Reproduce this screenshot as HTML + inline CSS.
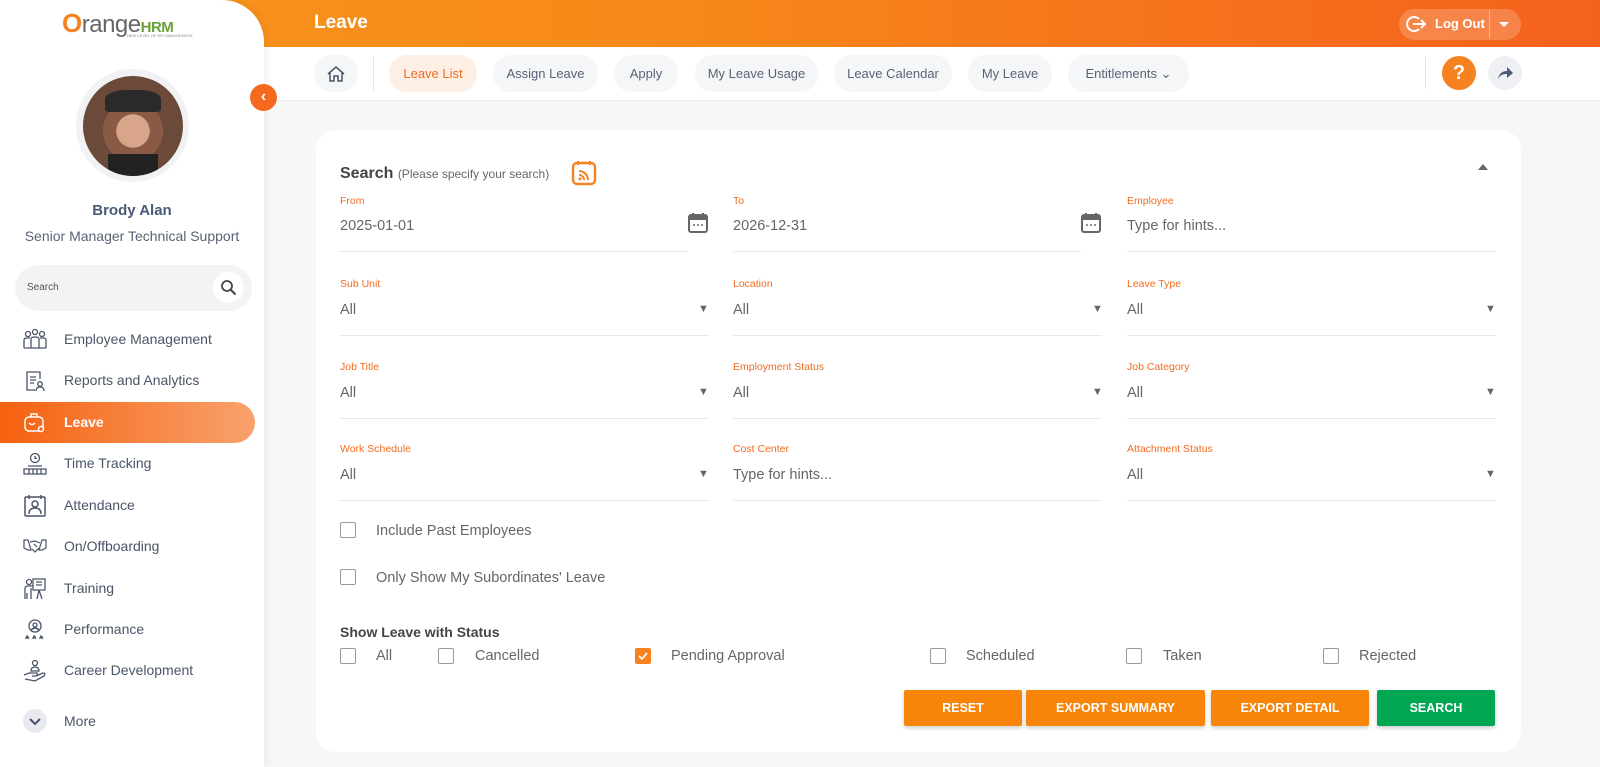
<!DOCTYPE html>
<html><head><meta charset="utf-8"><style>
*{box-sizing:border-box;margin:0;padding:0}
body{width:1600px;height:767px;overflow:hidden;background:#f7f7f7;font-family:"Liberation Sans",sans-serif;position:relative;color:#555}
.abs{position:absolute}
#hdr{left:0;top:0;width:1600px;height:47px;background:linear-gradient(90deg,#f7941d 0%,#f78a1a 40%,#f4611c 100%)}
#nav{left:264px;top:47px;width:1336px;height:54px;background:#fff;border-bottom:1px solid #eee}
#side{left:0;top:0;width:264px;height:767px;background:#fff;border-top-right-radius:42px;box-shadow:3px 0 8px rgba(0,0,0,.05)}
.pill{position:absolute;top:8px;height:37px;border-radius:18px;background:#f5f6f8;font-size:13px;color:#5a6275;line-height:37px;text-align:center}
.menu{position:absolute;left:0;width:255px;height:41px;font-size:14px;color:#4a5568;line-height:41px;padding-left:64px}
.menu svg{position:absolute;left:23px;top:9px}
.lbl{position:absolute;font-size:10.5px;color:#f26b1d}
.val{position:absolute;font-size:14.5px;color:#666}
.line{position:absolute;height:1px;background:#e8e8e8}
.arr{position:absolute;font-size:11px;color:#666}
.cb{position:absolute;width:16px;height:16px;border:1px solid #999;border-radius:2px;background:#fff}
.cbt{position:absolute;font-size:14.5px;color:#666}
.btn{position:absolute;top:690px;height:36px;background:#f7850a;color:#fff;font-size:12.5px;font-weight:bold;text-align:center;line-height:36px;border-radius:2px;box-shadow:0 2px 4px rgba(0,0,0,.2)}
</style></head><body>
<div id="hdr" class="abs"></div>
<div class="abs" style="left:314px;top:12px;color:#fff;font-size:19px;font-weight:bold">Leave</div>
<div class="abs" style="left:1399px;top:9px;width:122px;height:31px;border-radius:16px;background:rgba(255,255,255,.2)"></div>
<svg class="abs" style="left:1406px;top:14px" width="22" height="20" viewBox="0 0 22 20"><path d="M13 5A7 7 0 1 0 13 15" fill="none" stroke="#fff" stroke-width="2"/><path d="M7 10H19M15 6L19 10L15 14" fill="none" stroke="#fff" stroke-width="2"/></svg>
<div class="abs" style="left:1435px;top:16px;color:#fff;font-size:13px;font-weight:bold">Log Out</div>
<div class="abs" style="left:1489px;top:10px;width:1px;height:29px;background:rgba(255,255,255,.4)"></div>
<div class="abs" style="left:1499px;top:22px;border-left:5px solid transparent;border-right:5px solid transparent;border-top:5px solid #fff"></div>

<div id="nav" class="abs"></div>
<div class="pill" style="left:314px;top:55px;width:44px"><svg width="20" height="20" viewBox="0 0 20 20" style="margin-top:9px"><path d="M2 10L10 3L18 10M4 8.5V17H8V12H12V17H16V8.5" fill="none" stroke="#4a5568" stroke-width="1.5"/></svg></div>
<div class="abs" style="left:373px;top:57px;width:1px;height:34px;background:#e5e5e5"></div>
<div class="pill" style="left:389px;top:55px;width:88px;background:#fdefe4;color:#f36c21">Leave List</div>
<div class="pill" style="left:493px;top:55px;width:105px">Assign Leave</div>
<div class="pill" style="left:614px;top:55px;width:64px">Apply</div>
<div class="pill" style="left:695px;top:55px;width:123px">My Leave Usage</div>
<div class="pill" style="left:834px;top:55px;width:118px">Leave Calendar</div>
<div class="pill" style="left:968px;top:55px;width:84px">My Leave</div>
<div class="pill" style="left:1068px;top:55px;width:121px">Entitlements &#8964;</div>
<div class="abs" style="left:1425px;top:57px;width:1px;height:32px;background:#e5e5e5"></div>
<div class="abs" style="left:1442px;top:56px;width:34px;height:34px;border-radius:50%;background:#f68121;color:#fff;font-weight:bold;font-size:20px;text-align:center;line-height:34px">?</div>
<div class="abs" style="left:1488px;top:56px;width:34px;height:34px;border-radius:50%;background:#eef0f3"></div>
<svg class="abs" style="left:1495px;top:63px" width="20" height="20" viewBox="0 0 20 20"><path d="M3 16C4 10 8 8 12 8V4L18 10L12 15V11C8 11 5 12 3 16Z" fill="#4a5a78"/></svg>

<div id="side" class="abs"></div>
<div class="abs" style="left:62px;top:8px;font-size:24px;color:#666;letter-spacing:-0.5px"><span style="color:#f68121;font-size:26px;font-weight:bold">O</span>range<span style="color:#67a23a;font-size:15px;font-weight:bold">HRM</span></div>
<div class="abs" style="left:127px;top:33px;font-size:4px;color:#888">NEW LEVEL OF HR MANAGEMENT</div>
<div class="abs" style="left:76px;top:69px;width:113px;height:113px;border-radius:50%;background:#f1f2f4"></div>
<div class="abs" style="left:83px;top:76px;width:100px;height:100px;border-radius:50%;background:radial-gradient(circle at 50% 55%,#d9a58a 0 22%,#8a5a45 23% 40%,#6b4a3a 41%);overflow:hidden"><div style="position:absolute;left:22px;top:14px;width:56px;height:22px;background:#2a2a2a;border-radius:40% 40% 10% 10%"></div><div style="position:absolute;left:25px;top:78px;width:50px;height:22px;background:#222"></div></div>
<div class="abs" style="left:250px;top:84px;width:27px;height:27px;border-radius:50%;background:#f5691e;color:#fff;text-align:center;font-size:16px;line-height:26px;font-weight:bold">&#8249;</div>
<div class="abs" style="left:0;top:202px;width:264px;text-align:center;font-size:15px;font-weight:bold;color:#4a5a78">Brody Alan</div>
<div class="abs" style="left:0;top:228px;width:264px;text-align:center;font-size:14px;color:#5a6275">Senior Manager Technical Support</div>
<div class="abs" style="left:15px;top:265px;width:237px;height:46px;border-radius:23px;background:#f2f3f5;font-size:10px;color:#555;padding:17px 12px">Search</div>
<div class="abs" style="left:213px;top:272px;width:31px;height:31px;border-radius:50%;background:#fff"></div>
<svg class="abs" style="left:220px;top:279px" width="17" height="17" viewBox="0 0 17 17"><circle cx="7" cy="7" r="5" fill="none" stroke="#444" stroke-width="1.8"/><path d="M11 11L15.5 15.5" stroke="#444" stroke-width="2"/></svg>

<div class="menu" style="top:319px"><svg width="24" height="22"><g fill="none" stroke="#4a5568" stroke-width="1.3"><circle cx="5" cy="6" r="2.5"/><circle cx="12" cy="4" r="2.5"/><circle cx="19" cy="6" r="2.5"/><path d="M1 20V12Q1 10 4 10H7M17 10H20Q23 10 23 12V20M8 20V11Q8 9 12 9Q16 9 16 11V20M1 20H23"/></g></svg>Employee Management</div>
<div class="menu" style="top:360px"><svg width="24" height="24"><g fill="none" stroke="#4a5568" stroke-width="1.3"><path d="M12 21H4V3H17V10"/><path d="M7 8H13M7 11H13M7 14H11"/><circle cx="17" cy="15" r="2.3"/><path d="M13 22Q13 18 17 18Q21 18 21 22"/></g></svg>Reports and Analytics</div>
<div class="menu" style="top:402px;background:linear-gradient(90deg,#f5610f,#f8a26c);border-radius:0 21px 21px 0;color:#fff;font-weight:bold"><svg width="24" height="24"><g fill="none" stroke="#fff" stroke-width="1.5"><rect x="2" y="6" width="18" height="14" rx="4"/><path d="M8 6V3H14V6M6 12Q9 15 12 12"/><circle cx="18" cy="18" r="2.5" fill="#f5610f"/></g></svg>Leave</div>
<div class="menu" style="top:443px"><svg width="24" height="24"><g fill="none" stroke="#4a5568" stroke-width="1.3"><circle cx="12" cy="6" r="4.5"/><path d="M12 4V6.5H14M5 14H19M1 17H23V22H1ZM6 17V22M10 17V22M14 17V22M18 17V22"/></g></svg>Time Tracking</div>
<div class="menu" style="top:485px"><svg width="24" height="24"><g fill="none" stroke="#4a5568" stroke-width="1.5"><rect x="2" y="3" width="20" height="19" rx="1"/><path d="M6 1V5M18 1V5"/><circle cx="12" cy="10" r="3"/><path d="M6 20Q6 14 12 14Q18 14 18 20"/></g></svg>Attendance</div>
<div class="menu" style="top:526px"><svg width="24" height="22"><g fill="none" stroke="#4a5568" stroke-width="1.2"><path d="M1 5H5L8 15H5L1 13ZM23 5H19L16 15H19L23 13ZM7 7L12 6L17 8M9 14L12 17L16 13M11 9L14 12"/></g></svg>On/Offboarding</div>
<div class="menu" style="top:568px"><svg width="24" height="24"><g fill="none" stroke="#4a5568" stroke-width="1.3"><circle cx="6" cy="5" r="2.5"/><path d="M2 22V11Q2 9 6 9H10M4 22V16M8 22V11M10 2H22V13H10ZM13 5H19M13 8H19M16 13L14 22M16 13L19 22"/></g></svg>Training</div>
<div class="menu" style="top:609px"><svg width="24" height="24"><g fill="none" stroke="#4a5568" stroke-width="1.3"><circle cx="12" cy="8" r="6"/><circle cx="12" cy="7" r="2"/><path d="M8 12Q12 8 16 12M3 20L4 18L5 20L3 19H6ZM10 20L11 18L12 20L10 19H13ZM17 20L18 18L19 20L17 19H20Z"/></g></svg>Performance</div>
<div class="menu" style="top:650px"><svg width="24" height="24"><g fill="none" stroke="#4a5568" stroke-width="1.3"><circle cx="12" cy="4" r="2.5"/><path d="M8 12Q8 8 12 8Q16 8 16 12ZM1 16L6 14H14Q15 16 13 17H9M13 17L20 14Q23 14 21 17L12 22L2 20"/></g></svg>Career Development</div>
<div class="menu" style="top:701px"><svg width="24" height="24" style="top:8px"><circle cx="12" cy="12" r="12" fill="#e8eaf0"/><path d="M7 10L12 15L17 10" fill="none" stroke="#4a5568" stroke-width="2"/></svg>More</div>

<!-- card -->
<div class="abs" style="left:316px;top:130px;width:1205px;height:622px;background:#fff;border-radius:20px"></div>
<div class="abs" style="left:340px;top:165px;font-size:16px;font-weight:bold;color:#444">Search <span style="font-size:12px;font-weight:normal;color:#666">(Please specify your search)</span></div>
<svg class="abs" style="left:571px;top:160px" width="26" height="26" viewBox="0 0 26 26"><rect x="2" y="3" width="22" height="21" rx="4" fill="none" stroke="#f68121" stroke-width="2.4"/><path d="M7 1V5M19 1V5" stroke="#f68121" stroke-width="2"/><path d="M8 11A9 9 0 0 1 17 20M8 15A5 5 0 0 1 13 20" fill="none" stroke="#f68121" stroke-width="2"/><circle cx="9" cy="19" r="1.5" fill="#f68121"/></svg>
<div class="abs" style="left:1478px;top:164px;border-left:5px solid transparent;border-right:5px solid transparent;border-bottom:6px solid #666"></div>

<div class="lbl" style="left:340px;top:195px">From</div><div class="val" style="left:340px;top:218px">2025-01-01</div><div class="line" style="left:340px;top:251px;width:348px"></div>
<svg class="abs" style="left:688px;top:212px" width="20" height="21" viewBox="0 0 20 21"><rect x="1" y="3" width="18" height="17" rx="2" fill="none" stroke="#666" stroke-width="2"/><rect x="1" y="3" width="18" height="5" fill="#666"/><path d="M5 1V4M15 1V4" stroke="#666" stroke-width="2"/><path d="M5 13H7M9 13H11M13 13H15" stroke="#666" stroke-width="1.6"/></svg>
<div class="lbl" style="left:733px;top:195px">To</div><div class="val" style="left:733px;top:218px">2026-12-31</div><div class="line" style="left:733px;top:251px;width:348px"></div>
<svg class="abs" style="left:1081px;top:212px" width="20" height="21" viewBox="0 0 20 21"><rect x="1" y="3" width="18" height="17" rx="2" fill="none" stroke="#666" stroke-width="2"/><rect x="1" y="3" width="18" height="5" fill="#666"/><path d="M5 1V4M15 1V4" stroke="#666" stroke-width="2"/><path d="M5 13H7M9 13H11M13 13H15" stroke="#666" stroke-width="1.6"/></svg>
<div class="lbl" style="left:1127px;top:195px">Employee</div><div class="val" style="left:1127px;top:218px">Type for hints...</div><div class="line" style="left:1127px;top:251px;width:369px"></div>

<div class="lbl" style="left:340px;top:278px">Sub Unit</div><div class="val" style="left:340px;top:302px">All</div><div class="arr" style="left:698px;top:303px">&#9660;</div><div class="line" style="left:340px;top:335px;width:369px"></div>
<div class="lbl" style="left:733px;top:278px">Location</div><div class="val" style="left:733px;top:302px">All</div><div class="arr" style="left:1092px;top:303px">&#9660;</div><div class="line" style="left:733px;top:335px;width:369px"></div>
<div class="lbl" style="left:1127px;top:278px">Leave Type</div><div class="val" style="left:1127px;top:302px">All</div><div class="arr" style="left:1485px;top:303px">&#9660;</div><div class="line" style="left:1127px;top:335px;width:369px"></div>

<div class="lbl" style="left:340px;top:361px">Job Title</div><div class="val" style="left:340px;top:385px">All</div><div class="arr" style="left:698px;top:386px">&#9660;</div><div class="line" style="left:340px;top:418px;width:369px"></div>
<div class="lbl" style="left:733px;top:361px">Employment Status</div><div class="val" style="left:733px;top:385px">All</div><div class="arr" style="left:1092px;top:386px">&#9660;</div><div class="line" style="left:733px;top:418px;width:369px"></div>
<div class="lbl" style="left:1127px;top:361px">Job Category</div><div class="val" style="left:1127px;top:385px">All</div><div class="arr" style="left:1485px;top:386px">&#9660;</div><div class="line" style="left:1127px;top:418px;width:369px"></div>

<div class="lbl" style="left:340px;top:443px">Work Schedule</div><div class="val" style="left:340px;top:467px">All</div><div class="arr" style="left:698px;top:468px">&#9660;</div><div class="line" style="left:340px;top:500px;width:369px"></div>
<div class="lbl" style="left:733px;top:443px">Cost Center</div><div class="val" style="left:733px;top:467px">Type for hints...</div><div class="line" style="left:733px;top:500px;width:369px"></div>
<div class="lbl" style="left:1127px;top:443px">Attachment Status</div><div class="val" style="left:1127px;top:467px">All</div><div class="arr" style="left:1485px;top:468px">&#9660;</div><div class="line" style="left:1127px;top:500px;width:369px"></div>

<div class="cb" style="left:340px;top:522px"></div><div class="cbt" style="left:376px;top:523px">Include Past Employees</div>
<div class="cb" style="left:340px;top:569px"></div><div class="cbt" style="left:376px;top:570px">Only Show My Subordinates' Leave</div>

<div class="abs" style="left:340px;top:624px;font-size:14px;font-weight:bold;color:#444">Show Leave with Status</div>
<div class="cb" style="left:340px;top:648px"></div><div class="cbt" style="left:376px;top:648px">All</div>
<div class="cb" style="left:438px;top:648px"></div><div class="cbt" style="left:475px;top:648px">Cancelled</div>
<div class="cb" style="left:635px;top:648px;background:#f68121;border-color:#f68121"><svg width="14" height="14" style="position:absolute;left:0;top:0"><path d="M3 7L6 10L11 4" fill="none" stroke="#fff" stroke-width="1.6"/></svg></div><div class="cbt" style="left:671px;top:648px">Pending Approval</div>
<div class="cb" style="left:930px;top:648px"></div><div class="cbt" style="left:966px;top:648px">Scheduled</div>
<div class="cb" style="left:1126px;top:648px"></div><div class="cbt" style="left:1163px;top:648px">Taken</div>
<div class="cb" style="left:1323px;top:648px"></div><div class="cbt" style="left:1359px;top:648px">Rejected</div>

<div class="btn" style="left:904px;width:118px">RESET</div>
<div class="btn" style="left:1026px;width:179px">EXPORT SUMMARY</div>
<div class="btn" style="left:1211px;width:158px">EXPORT DETAIL</div>
<div class="btn" style="left:1377px;width:118px;background:#00a651">SEARCH</div>
</body></html>
